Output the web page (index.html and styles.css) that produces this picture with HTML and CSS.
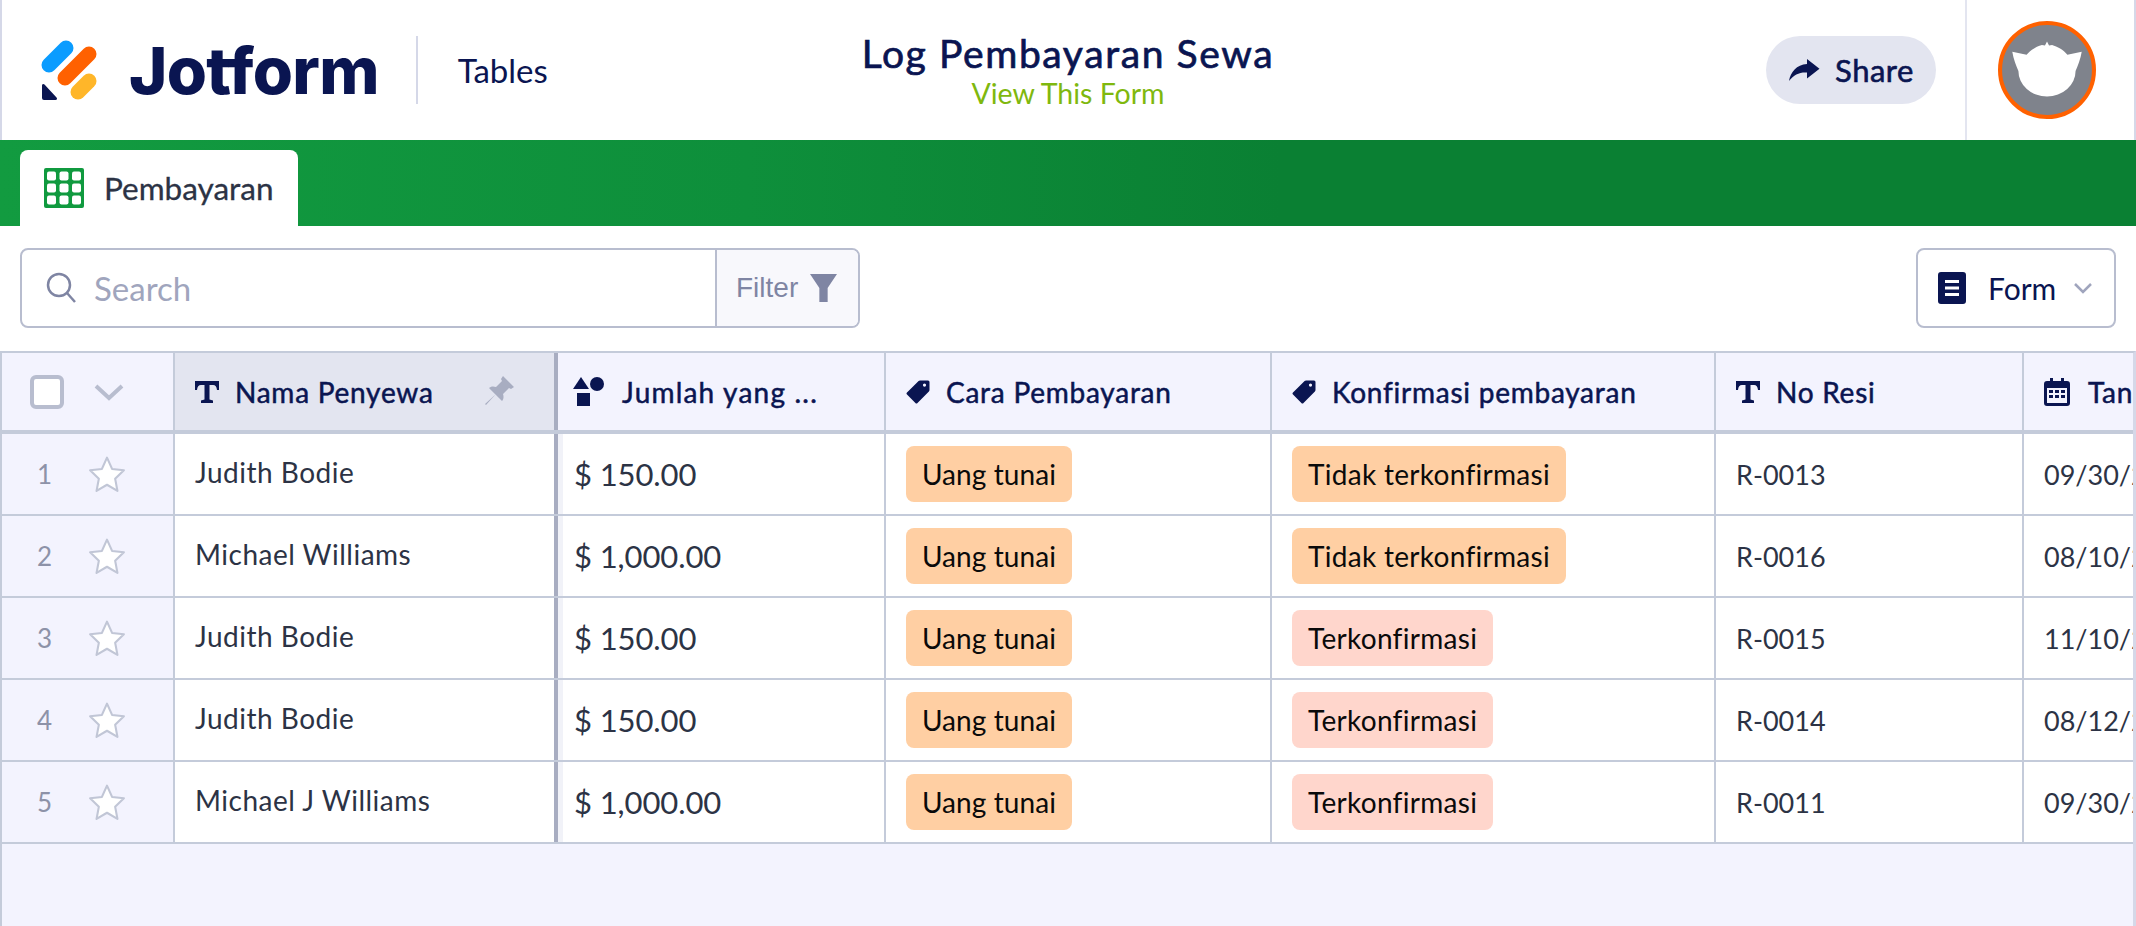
FILE: index.html
```html
<!DOCTYPE html>
<html lang="id">
<head>
<meta charset="utf-8">
<title>Log Pembayaran Sewa</title>
<link rel="stylesheet" href="styles.css">
</head>
<body>
<svg class="defs" width="0" height="0" aria-hidden="true">
  <symbol id="t" viewBox="0 0 24 24"><path d="M0 1h24v9h-2c-.4-3.500-1.500-5-4-5h-3.500v14.500l3.500.9V23H6v-2.600l3.500-.9V5H6C3.500 5 2.400 6.500 2 10H0z"/></symbol>
  <symbol id="tag" viewBox="0 0 24 24"><path d="M14 .5h8a1.500 1.500 0 0 1 1.500 1.500v8a2 2 0 0 1-.6 1.400L11.500 23a1.500 1.500 0 0 1-2.100 0L1 14.600a1.500 1.500 0 0 1 0-2.100L12.600 1.100A2 2 0 0 1 14 .5zM18.500 3.500a1.600 1.600 0 1 0 0 3.200 1.600 1.600 0 0 0 0-3.200z" fill-rule="evenodd"/></symbol>
  <symbol id="star" viewBox="0 0 36 36"><path d="M18 2.500l4.800 10.700 11.200 1.300-8.300 7.900 2.200 11.600L18 28.200 8.100 34l2.200-11.600L2 14.500l11.200-1.300z" fill="#fff" stroke="#c1c6d6" stroke-width="2" stroke-linejoin="round"/></symbol>
</svg>

<header class="topbar">
  <div class="brand">
    <svg class="logo" viewBox="0 0 57 60" aria-hidden="true">
      <path d="M8 25L25 8" stroke="#0a9cff" stroke-width="15" stroke-linecap="round"/>
      <path d="M24 38L48 14" stroke="#ff6100" stroke-width="15" stroke-linecap="round"/>
      <path d="M37 52L48 41" stroke="#ffb629" stroke-width="15" stroke-linecap="round"/>
      <path d="M1 45.500c0-1.500 1.500-2 2.500-1l12 13c1 1 .5 2.500-1 2.500H3a2 2 0 0 1-2-2z" fill="#0a1551"/>
    </svg>
    <span class="wordmark">Jotform</span>
    <span class="brand-sep"></span>
    <span class="product">Tables</span>
  </div>
  <div class="title-group">
    <div class="title">Log Pembayaran Sewa</div>
    <a class="form-link">View This Form</a>
  </div>
  <div class="actions">
    <button class="share">
      <svg class="share-icon" viewBox="0 0 32 24" aria-hidden="true"><path d="M19 1l12.500 9.800L19 20.500v-6C11.500 14 6 16.500 1 23 2.500 14 8.500 6.800 19 6z"/></svg>
      <span>Share</span>
    </button>
    <div class="avatar-wrap">
      <svg class="avatar" viewBox="0 0 96 96" aria-hidden="true">
        <circle cx="48" cy="48" r="46" fill="#7f838c" stroke="#ff6100" stroke-width="4"/>
        <path d="M14 30L28 33C32 28 38 25 43 23.500L46 24L48 20L50 24L53 23.500C58 25 64 28 68 33L82 30C81 37 78 44 76 49A28 25 0 0 1 20 49C18 44 15 37 14 30Z" fill="#fff"/>
      </svg>
    </div>
  </div>
</header>

<nav class="tabbar">
  <div class="tab">
    <svg class="grid-icon" viewBox="0 0 40 40" aria-hidden="true">
      <rect width="40" height="40" rx="2" fill="#109a3f"/>
      <g fill="#fff">
        <rect x="3" y="3.500" width="9" height="9" rx="2"/><rect x="15.500" y="3.500" width="9" height="9" rx="2"/><rect x="28" y="3.500" width="9" height="9" rx="2"/>
        <rect x="3" y="15.500" width="9" height="9" rx="2"/><rect x="15.500" y="15.500" width="9" height="9" rx="2"/><rect x="28" y="15.500" width="9" height="9" rx="2"/>
        <rect x="3" y="27.500" width="9" height="9" rx="2"/><rect x="15.500" y="27.500" width="9" height="9" rx="2"/><rect x="28" y="27.500" width="9" height="9" rx="2"/>
      </g>
    </svg>
    <span>Pembayaran</span>
  </div>
</nav>

<section class="toolbar">
  <div class="search">
    <div class="search-field">
      <svg class="search-icon" viewBox="0 0 30 32" aria-hidden="true"><circle cx="13" cy="13" r="11" fill="none" stroke="#7f85a3" stroke-width="2.500"/><path d="M21 21l8 9" stroke="#7f85a3" stroke-width="2.500"/></svg>
      <span>Search</span>
    </div>
    <div class="filter">
      <span>Filter</span>
      <svg class="filter-icon" viewBox="0 0 26 28" preserveAspectRatio="none" aria-hidden="true"><path d="M0 0h26L17 14v14H9V14z"/></svg>
    </div>
  </div>
  <div class="form-btn">
    <svg class="doc-icon" viewBox="0 0 28 32" aria-hidden="true"><path d="M3 0h22a3 3 0 0 1 3 3v26a3 3 0 0 1-3 3H3a3 3 0 0 1-3-3V3a3 3 0 0 1 3-3zm4 8v3h14V8zm0 6.500v3h14v-3zm0 6.500v3h14v-3z" fill-rule="evenodd"/></svg>
    <span>Form</span>
    <svg class="small-chevron" viewBox="0 0 20 12" aria-hidden="true"><path d="M2 2l8 8 8-8" fill="none" stroke="#a0a5bd" stroke-width="2.500"/></svg>
  </div>
</section>

<main class="sheet">
  <div class="row head">
    <div class="cell ctl">
      <span class="checkbox"></span>
      <svg class="chevron" viewBox="0 0 32 18" aria-hidden="true"><path d="M3 3l13 12L29 3" fill="none" stroke="#b8bdcf" stroke-width="4"/></svg>
    </div>
    <div class="cell pinned"><svg class="type-t"><use href="#t"/></svg><span>Nama Penyewa</span>
      <svg class="pin" viewBox="0 0 32 32" aria-hidden="true"><path d="M20 1l11 11-3 2-2-1-6 6c1 3 .5 5.500-1 7L12.500 19.500 3 30l-1-1 10.500-9.500L6 13c1.500-1.500 4-2 7-1l6-6-1-2z" fill="#a8adc1"/></svg>
    </div>
    <div class="cell after-pin"><svg class="shapes" viewBox="0 0 32 30" aria-hidden="true"><path d="M8 0l8 12H0z"/><circle cx="24" cy="7" r="7"/><rect x="4" y="16" width="13" height="13"/></svg><span class="clipped">Jumlah yang ...</span></div>
    <div class="cell"><svg class="tag-icon"><use href="#tag"/></svg><span>Cara Pembayaran</span></div>
    <div class="cell"><svg class="tag-icon"><use href="#tag"/></svg><span>Konfirmasi pembayaran</span></div>
    <div class="cell"><svg class="type-t"><use href="#t"/></svg><span>No Resi</span></div>
    <div class="cell last"><svg class="cal" viewBox="0 0 26 28" aria-hidden="true"><path d="M6 0h3v3h8V0h3v3h3a3 3 0 0 1 3 3v19a3 3 0 0 1-3 3H3a3 3 0 0 1-3-3V6a3 3 0 0 1 3-3h3zM3 10v15h20V10zm2 2h4v3H5zm6 0h4v3h-4zm6 0h4v3h-4zM5 17h4v3H5zm6 0h4v3h-4zm6 0h4v3h-4z" fill-rule="evenodd"/></svg><span>Tanggal</span></div>
  </div>

  <div class="row">
    <div class="cell ctl"><span class="num">1</span><svg class="star"><use href="#star"/></svg></div>
    <div class="cell name">Judith Bodie</div>
    <div class="cell money after-pin">$ 150.00</div>
    <div class="cell"><span class="tag orange short">Uang tunai</span></div>
    <div class="cell"><span class="tag orange">Tidak terkonfirmasi</span></div>
    <div class="cell plain">R-0013</div>
    <div class="cell plain last">09/30/2022</div>
  </div>
  <div class="row">
    <div class="cell ctl"><span class="num">2</span><svg class="star"><use href="#star"/></svg></div>
    <div class="cell name">Michael Williams</div>
    <div class="cell money after-pin">$ 1,000.00</div>
    <div class="cell"><span class="tag orange short">Uang tunai</span></div>
    <div class="cell"><span class="tag orange">Tidak terkonfirmasi</span></div>
    <div class="cell plain">R-0016</div>
    <div class="cell plain last">08/10/2022</div>
  </div>
  <div class="row">
    <div class="cell ctl"><span class="num">3</span><svg class="star"><use href="#star"/></svg></div>
    <div class="cell name">Judith Bodie</div>
    <div class="cell money after-pin">$ 150.00</div>
    <div class="cell"><span class="tag orange short">Uang tunai</span></div>
    <div class="cell"><span class="tag pink">Terkonfirmasi</span></div>
    <div class="cell plain">R-0015</div>
    <div class="cell plain last">11/10/2022</div>
  </div>
  <div class="row">
    <div class="cell ctl"><span class="num">4</span><svg class="star"><use href="#star"/></svg></div>
    <div class="cell name">Judith Bodie</div>
    <div class="cell money after-pin">$ 150.00</div>
    <div class="cell"><span class="tag orange short">Uang tunai</span></div>
    <div class="cell"><span class="tag pink">Terkonfirmasi</span></div>
    <div class="cell plain">R-0014</div>
    <div class="cell plain last">08/12/2022</div>
  </div>
  <div class="row">
    <div class="cell ctl"><span class="num">5</span><svg class="star"><use href="#star"/></svg></div>
    <div class="cell name">Michael J Williams</div>
    <div class="cell money after-pin">$ 1,000.00</div>
    <div class="cell"><span class="tag orange short">Uang tunai</span></div>
    <div class="cell"><span class="tag pink">Terkonfirmasi</span></div>
    <div class="cell plain">R-0011</div>
    <div class="cell plain last">09/30/2022</div>
  </div>
</main>
</body>
</html>
```

FILE: styles.css
```css
* { box-sizing: border-box; }
html, body { margin: 0; height: 100%; }
body {
  width: 2136px;
  height: 926px;
  overflow: hidden;
  display: flex;
  flex-direction: column;
  background: #f3f3fe;
  font-family: "Lato", "Liberation Sans", sans-serif;
  color: #2c3345;
}
.defs { position: absolute; }

.topbar {
  height: 140px;
  flex: none;
  display: grid;
  grid-template-columns: 1fr auto 1fr;
  align-items: center;
  background: #fff;
  border-left: 2px solid #d5d8e8;
  border-right: 2px solid #d5d8e8;
  color: #0a1551;
}
.brand { display: flex; align-items: center; padding-left: 39px; }
.logo { width: 57px; height: 60px; }
.wordmark { margin-left: 31px; font: 800 65px/1 "Inter", sans-serif; letter-spacing: -.7px; color: #0a1551; }
.brand-sep { width: 2px; height: 68px; background: #d5d8e8; margin-left: 37px; }
.product { margin-left: 40px; font-size: 33px; }
.title-group { display: flex; flex-direction: column; align-items: center; gap: 2px; padding-bottom: 2px; }
.title { font-size: 39px; line-height: 46px; letter-spacing: 1.600px; -webkit-text-stroke: .7px #0a1551; }
.form-link { font-size: 28.500px; line-height: 30px; color: #7fb80e; }
.actions { display: flex; justify-content: flex-end; align-items: stretch; height: 140px; }
.share {
  align-self: center;
  width: 170px;
  height: 68px;
  border: 0;
  border-radius: 34px;
  background: #e3e5f0;
  color: #0a1551;
  font: 400 31px "Lato", sans-serif;
  letter-spacing: .5px;
  -webkit-text-stroke: .6px #0a1551;
  display: flex;
  align-items: center;
  justify-content: center;
  gap: 15px;
}
.share-icon { width: 32px; height: 24px; fill: #0a1551; }
.avatar-wrap {
  margin-left: 29px;
  width: 169px;
  padding-right: 8px;
  border-left: 2px solid #e3e5f0;
  display: flex;
  align-items: center;
  justify-content: center;
}
.avatar { width: 98px; height: 98px; }

.tabbar {
  height: 86px;
  flex: none;
  padding: 10px 0 0 20px;
  background: linear-gradient(90deg, #129b40 0%, #0e8f3b 35%, #0a8033 60%, #0a8033 100%);
}
.tab {
  width: 278px;
  height: 76px;
  background: #fff;
  border-radius: 8px 8px 0 0;
  display: flex;
  align-items: center;
  padding-left: 24px;
  gap: 20px;
  font-size: 31.500px;
  -webkit-text-stroke: .3px #2c3345;
}
.grid-icon { width: 40px; height: 40px; }

.toolbar {
  height: 125px;
  flex: none;
  background: #fff;
  display: flex;
  justify-content: space-between;
  align-items: center;
  padding: 0 20px 2px 20px;
}
.search {
  width: 840px;
  height: 80px;
  display: flex;
  border: 2px solid #b8bdcf;
  border-radius: 8px;
  overflow: hidden;
}
.search-field {
  width: 695px;
  display: flex;
  align-items: center;
  gap: 18px;
  padding-left: 24px;
  font-size: 33px;
  color: #a0a5bd;
  border-right: 2px solid #b8bdcf;
}
.search-icon { width: 30px; height: 32px; }
.filter {
  flex: 1;
  background: #f8f8fc;
  display: flex;
  align-items: center;
  gap: 12px;
  padding-left: 19px;
  font: 400 28px "Liberation Sans", sans-serif;
  color: #7f85a3;
}
.filter-icon { width: 27px; height: 28px; fill: #7f85a3; }
.form-btn {
  width: 200px;
  height: 80px;
  border: 2px solid #b8bdcf;
  border-radius: 8px;
  display: flex;
  align-items: center;
  padding-left: 20px;
  font-size: 30px;
  color: #0a1551;
}
.doc-icon { width: 28px; height: 32px; fill: #0a1551; margin-right: 22px; }
.small-chevron { width: 20px; height: 12px; margin-left: 17px; }

.sheet { flex: 1; overflow: hidden; border-top: 2px solid #c4cbda; border-left: 2px solid #c4cbda; border-right: 3px solid #d5d8e8; }
.row {
  display: grid;
  grid-template-columns: 173px 383px 328px 386px 444px 308px 400px;
  height: 82px;
  border-bottom: 2px solid #c4cbda;
  background: #fff;
  width: 2400px;
}
.row.head { height: 81px; border-bottom-width: 4px; background: #f3f3fe; font-size: 28px; color: #0a1551; letter-spacing: .75px; -webkit-text-stroke: .5px #0a1551; }
.clipped { letter-spacing: 1.200px; }
.cell {
  display: flex;
  align-items: center;
  padding-left: 20px;
  border-right: 2px solid #c4cbda;
  font-size: 28px;
  white-space: nowrap;
}
.ctl { background: #f3f3fe; padding-left: 0; }
.head .cell { gap: 16px; }
.head .pinned { background: #e3e5f0; position: relative; border-right: 4px solid #a8adc1; }
.name { border-right: 4px solid #a8adc1; color: #2c3345; letter-spacing: .5px; padding-bottom: 4px; }
.after-pin { box-shadow: inset 5px 0 0 #f1f2f8; padding-left: 16px; }
.head .after-pin { gap: 17px; padding-left: 15px; box-shadow: none; }
.last { border-right: 0; }

.checkbox { width: 34px; height: 34px; margin-left: 28px; border: 4px solid #b8bdcf; border-radius: 6px; background: #fff; }
.chevron { width: 32px; height: 18px; margin-left: 13px; }
.type-t { width: 24px; height: 24px; fill: #0a1551; flex: none; }
.tag-icon { width: 24px; height: 24px; fill: #0a1551; flex: none; }
.shapes { width: 32px; height: 30px; fill: #0a1551; flex: none; }
.cal { width: 26px; height: 28px; fill: #0a1551; flex: none; margin-right: 2px; }
.pin { position: absolute; left: 308px; top: 22px; width: 32px; height: 32px; }

.num { width: 45px; margin-left: 20px; font-size: 26px; color: #8d92a8; text-align: center; }
.star { width: 38px; height: 38px; margin-left: 21px; }
.money { font-size: 31px; letter-spacing: -.1px; }
.plain { font-size: 27px; }
.tag {
  height: 56px;
  padding: 0 16px;
  display: inline-flex;
  align-items: center;
  border-radius: 8px;
  font-size: 28px;
  letter-spacing: .3px;
  color: #0a0a0a;
}
.tag.short { letter-spacing: .1px; padding-right: 16px; }
.orange { background: #ffcfa3; }
.pink { background: #ffd6cc; }
```
